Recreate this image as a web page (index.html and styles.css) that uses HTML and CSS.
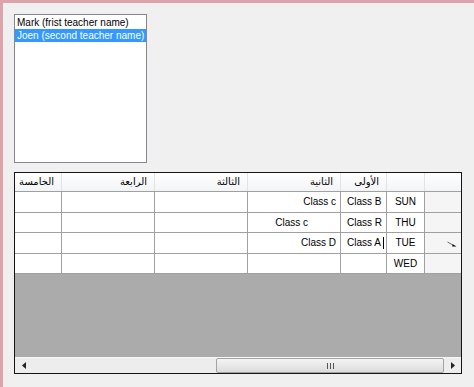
FILE: index.html
```html
<!DOCTYPE html>
<html lang="en">
<head>
    <meta charset="UTF-8">
    <title>Teachers schedule</title>
    <link rel="stylesheet" href="styles.css">
</head>
<body>
    <div class="window">
        <!-- Teachers list -->
        <div class="teachers">
            <div class="item">Mark (frist teacher name)</div>
            <div class="item selected">Joen (second teacher name)</div>
        </div>

        <!-- Schedule grid (right to left) -->
        <div class="grid">
            <div class="row head">
                <div class="rh"></div>
                <div></div>
                <div>الأولى</div>
                <div>الثانية</div>
                <div>الثالثة</div>
                <div>الرابعة</div>
                <div>الخامسة</div>
            </div>
            <div class="row">
                <div class="rh"></div>
                <div class="day">SUN</div>
                <div class="first">Class B</div>
                <div>Class c</div>
                <div></div>
                <div></div>
                <div></div>
            </div>
            <div class="row short">
                <div class="rh"></div>
                <div class="day">THU</div>
                <div class="first">Class R</div>
                <div class="shifted">Class c</div>
                <div></div>
                <div></div>
                <div></div>
            </div>
            <div class="row">
                <div class="rh">
                    <svg class="pen" width="10" height="6" viewBox="0 0 10 6">
                        <path d="M0.5 1 L6.5 4.3" stroke="#666" stroke-width="1" fill="none"/>
                        <path d="M5.8 3.2 L9.5 5.6 L5.2 5.4 Z" fill="#000"/>
                    </svg>
                </div>
                <div class="day">TUE</div>
                <div class="first">Class A<span class="caret"></span></div>
                <div>Class D</div>
                <div></div>
                <div></div>
                <div></div>
            </div>
            <div class="row short">
                <div class="rh"></div>
                <div class="day">WED</div>
                <div class="first"></div>
                <div></div>
                <div></div>
                <div></div>
                <div></div>
            </div>
            <div class="filler"></div>
            <div class="hscroll">
                <div class="arrow">
                    <svg width="4" height="7" viewBox="0 0 4 7"><path d="M4 0 L0 3.5 L4 7 Z" fill="#222"/></svg>
                </div>
                <div class="track"></div>
                <div class="thumb">
                    <svg width="7" height="6" viewBox="0 0 7 6">
                        <path d="M0.5 0 V6 M3.5 0 V6 M6.5 0 V6" stroke="#555" stroke-width="1"/>
                    </svg>
                </div>
                <div class="arrow">
                    <svg width="4" height="7" viewBox="0 0 4 7"><path d="M0 0 L4 3.5 L0 7 Z" fill="#222"/></svg>
                </div>
            </div>
        </div>
    </div>
</body>
</html>
```

FILE: styles.css
```css
body {
    margin: 0;
    background: #f0f0f0;
    font-family: "Liberation Sans", Arial, sans-serif;
    font-size: 10px;
    color: #000;
}
.window {
    height: 387px;
    box-sizing: border-box;
    border-top: 3px solid #dca4aa;
    border-left: 3px solid #dca4aa;
    padding: 11px 0 0 11px;
}
.teachers {
    width: 133px;
    height: 149px;
    box-sizing: border-box;
    border: 1px solid #828790;
    background: #fff;
    padding-top: 1px;
}
.item {
    height: 13px;
    line-height: 13px;
    padding-left: 2px;
    white-space: nowrap;
}
.selected {
    background: #3399ff;
    color: #fff;
}
.grid {
    width: 448px;
    height: 202px;
    margin-top: 9px;
    box-sizing: border-box;
    border: 1px solid #151515;
    background: #ababab;
    display: flex;
    flex-direction: column;
}
.row {
    display: grid;
    grid-template-columns: 37px 38px 46px 93px 93px 93px 46px;
    direction: rtl;
    height: 21px;
    box-sizing: border-box;
    border-bottom: 1px solid #a0a0a0;
    background: #fff;
}
.row.short {
    height: 20px;
}
.row > div {
    border-left: 1px solid #a0a0a0;
    direction: ltr;
    text-align: right;
    padding-right: 4px;
    line-height: 20px;
    white-space: nowrap;
    overflow: hidden;
}
.row > div:last-child {
    border-left: none;
}
.row.short > div {
    line-height: 19px;
}
.row.head {
    height: 19px;
    background: linear-gradient(#ffffff, #f3f4f6);
}
.row.head > div {
    direction: rtl;
    font-family: "DejaVu Sans", sans-serif;
    font-size: 10px;
    line-height: 18px;
    padding-right: 7px;
    border-left-color: #e2e3e6;
}
.row .rh {
    background: #f5f5f5;
    position: relative;
}
.row.head .rh {
    background: linear-gradient(#ffffff, #f3f4f6);
}
.row .day {
    text-align: center;
    padding-right: 0;
}
.row .first {
    text-align: left;
    padding-left: 6px;
    padding-right: 0;
}
.row .shifted {
    padding-right: 32px;
}
.caret {
    display: inline-block;
    width: 1px;
    height: 12px;
    background: #000;
    margin-left: 2px;
    vertical-align: middle;
}
.pen {
    position: absolute;
    left: 22px;
    top: 8px;
}
.filler {
    flex: 1;
}
.hscroll {
    height: 15px;
    display: flex;
    background: #ededed;
    border-top: 1px solid #f7f7f7;
}
.arrow {
    width: 17px;
    display: flex;
    align-items: center;
    justify-content: center;
}
.track {
    width: 184px;
}
.thumb {
    flex: 1;
    box-sizing: border-box;
    border: 1px solid #a3a3a3;
    border-radius: 2px;
    background: linear-gradient(#f4f4f4, #dcdcdc);
    display: flex;
    align-items: center;
    justify-content: center;
}
```
